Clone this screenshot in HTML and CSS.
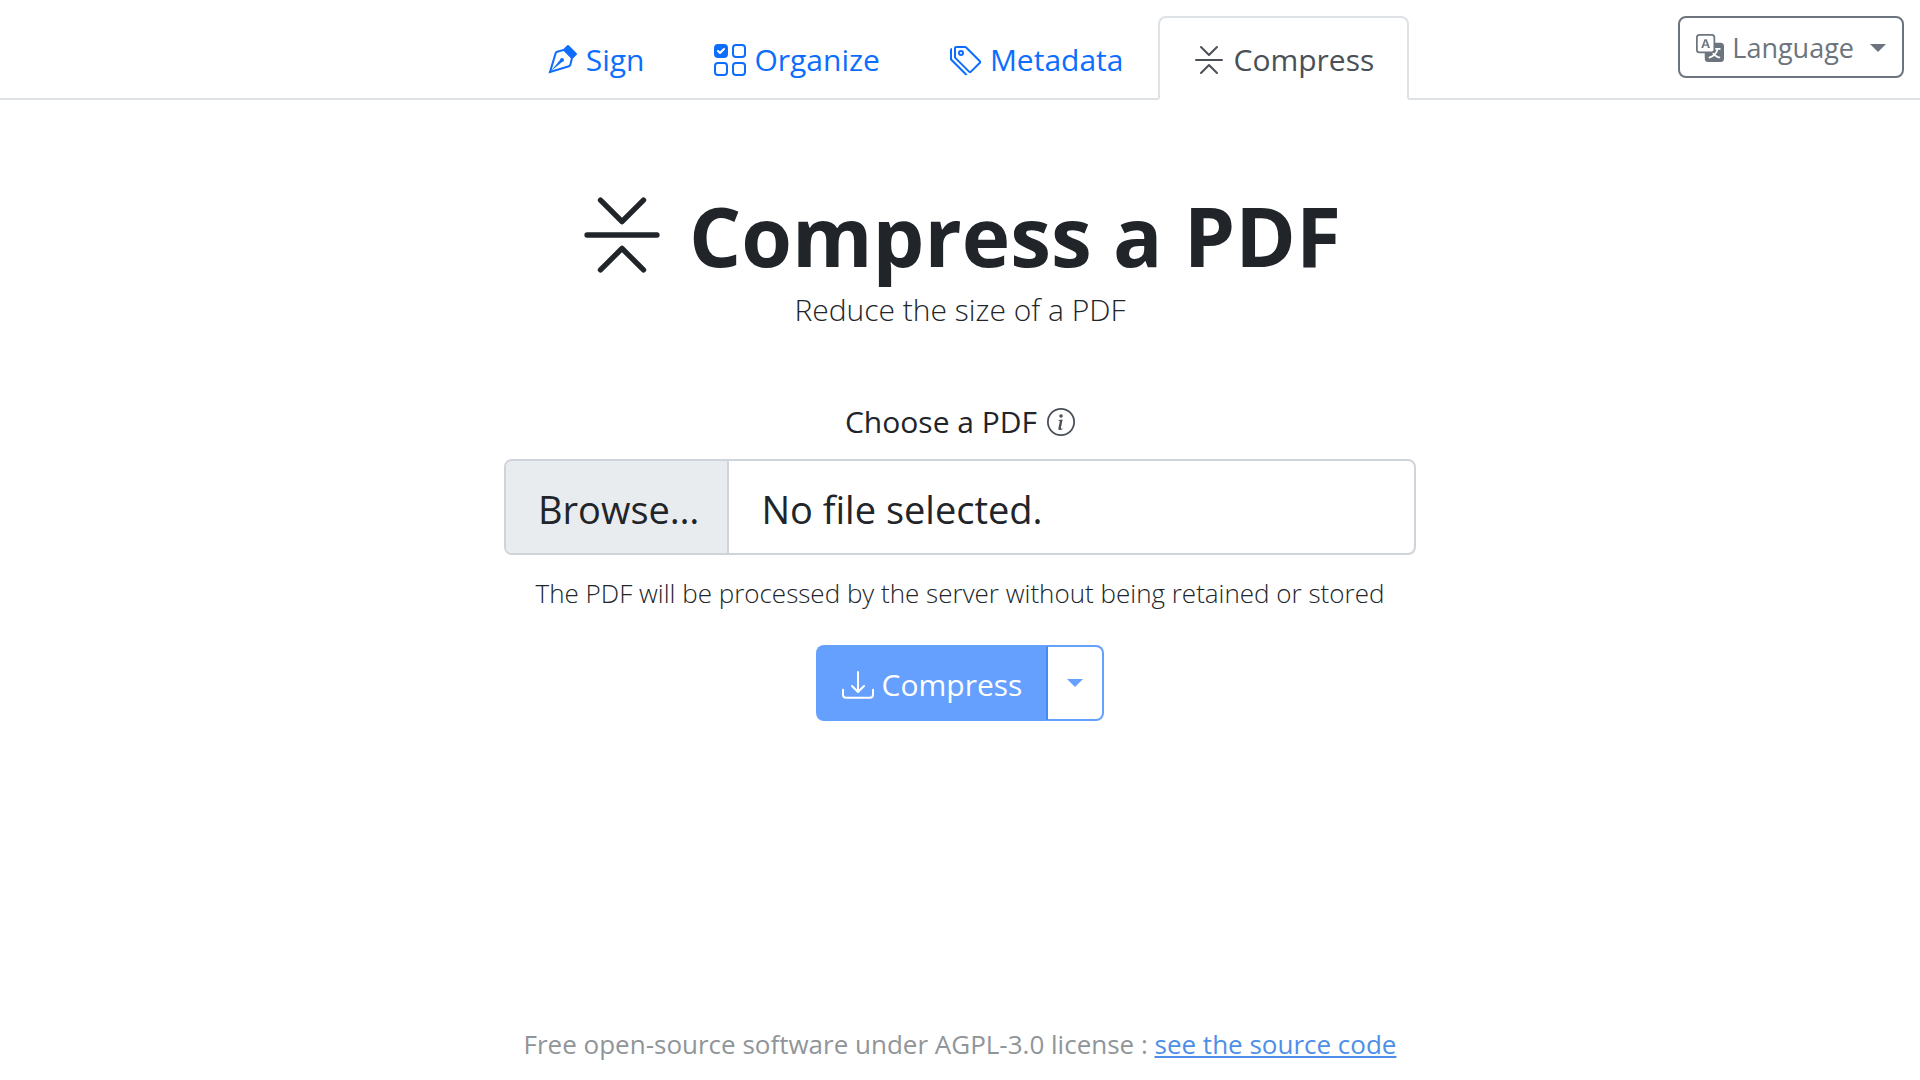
FILE: index.html
```html
<!DOCTYPE html>
<html lang="en">
<head>
<meta charset="utf-8">
<meta name="viewport" content="width=device-width, initial-scale=1">
<title>Compress a PDF</title>
<link rel="stylesheet" href="styles.css">
</head>
<body>
<svg class="sprite" aria-hidden="true">
  <symbol id="i-pen" viewBox="0 0 16 16"><path fill-rule="evenodd" d="M10.646.646a.5.5 0 0 1 .708 0l4 4a.5.5 0 0 1 0 .708l-1.902 1.902-.829 3.313a1.5 1.5 0 0 1-1.024 1.073L1.254 14.746 4.358 4.4A1.5 1.5 0 0 1 5.43 3.377l3.313-.828zm-1.8 2.908-3.173.793a.5.5 0 0 0-.358.342l-2.57 8.565 8.567-2.57a.5.5 0 0 0 .34-.357l.794-3.174-3.6-3.6z"/><path fill-rule="evenodd" d="M2.832 13.228 8 9a1 1 0 1 0-1-1l-4.228 5.168-.026.086z"/></symbol>
  <symbol id="i-grid" viewBox="0 0 16 16"><path d="M2 10h3a1 1 0 0 1 1 1v3a1 1 0 0 1-1 1H2a1 1 0 0 1-1-1v-3a1 1 0 0 1 1-1m9-9h3a1 1 0 0 1 1 1v3a1 1 0 0 1-1 1h-3a1 1 0 0 1-1-1V2a1 1 0 0 1 1-1m0 9a1 1 0 0 0-1 1v3a1 1 0 0 0 1 1h3a1 1 0 0 0 1-1v-3a1 1 0 0 0-1-1zm0-10a2 2 0 0 0-2 2v3a2 2 0 0 0 2 2h3a2 2 0 0 0 2-2V2a2 2 0 0 0-2-2zM2 9a2 2 0 0 0-2 2v3a2 2 0 0 0 2 2h3a2 2 0 0 0 2-2v-3a2 2 0 0 0-2-2zm7 2a2 2 0 0 1 2-2h3a2 2 0 0 1 2 2v3a2 2 0 0 1-2 2h-3a2 2 0 0 1-2-2zM0 2a2 2 0 0 1 2-2h3a2 2 0 0 1 2 2v3a2 2 0 0 1-2 2H2a2 2 0 0 1-2-2zm5.354.854a.5.5 0 1 0-.708-.708L3 3.793l-.646-.647a.5.5 0 1 0-.708.708l1 1a.5.5 0 0 0 .708 0z"/></symbol>
  <symbol id="i-tags" viewBox="0 0 16 16"><path d="M3 2v4.586l7 7L14.586 9l-7-7zM2 2a1 1 0 0 1 1-1h4.586a1 1 0 0 1 .707.293l7 7a1 1 0 0 1 0 1.414l-4.586 4.586a1 1 0 0 1-1.414 0l-7-7A1 1 0 0 1 2 6.586z"/><path d="M5.5 5a.5.5 0 1 1 0-1 .5.5 0 0 1 0 1m0 1a1.5 1.5 0 1 0 0-3 1.5 1.5 0 0 0 0 3M1 7.086a1 1 0 0 0 .293.707L8.75 15.25l-.043.043a1 1 0 0 1-1.414 0l-7-7A1 1 0 0 1 0 7.586V3a1 1 0 0 1 1-1z"/></symbol>
  <symbol id="i-contract" viewBox="0 0 16 16"><path d="M3.646 14.854a.5.5 0 0 0 .708 0L8 11.207l3.646 3.647a.5.5 0 0 0 .708-.708l-4-4a.5.5 0 0 0-.708 0l-4 4a.5.5 0 0 0 0 .708m0-13.708a.5.5 0 0 1 .708 0L8 4.793l3.646-3.647a.5.5 0 0 1 .708.708l-4 4a.5.5 0 0 1-.708 0l-4-4a.5.5 0 0 1 0-.708M1 8a.5.5 0 0 1 .5-.5h13a.5.5 0 0 1 0 1h-13A.5.5 0 0 1 1 8"/></symbol>
  <symbol id="i-translate" viewBox="0 0 16 16"><path d="M4.545 6.714 4.11 8H3l1.862-5h1.284L8 8H6.833l-.435-1.286zm1.634-.736L5.5 3.956h-.049l-.679 2.022z"/><path d="M0 2a2 2 0 0 1 2-2h7a2 2 0 0 1 2 2v3h3a2 2 0 0 1 2 2v7a2 2 0 0 1-2 2H7a2 2 0 0 1-2-2v-3H2a2 2 0 0 1-2-2zm2-1a1 1 0 0 0-1 1v7a1 1 0 0 0 1 1h7a1 1 0 0 0 1-1V2a1 1 0 0 0-1-1zm7.138 9.995q.289.451.63.846c-.748.575-1.673 1.001-2.768 1.292.178.217.451.635.555.867 1.125-.359 2.08-.844 2.886-1.494.777.665 1.739 1.165 2.93 1.472.133-.254.414-.673.629-.89-1.125-.253-2.057-.694-2.82-1.284.681-.747 1.222-1.651 1.621-2.757H14V8h-3v1.047h.765c-.318.844-.74 1.546-1.272 2.13a6 6 0 0 1-.415-.492 2 2 0 0 1-.94.31"/></symbol>
  <symbol id="i-info" viewBox="0 0 16 16"><path d="M8 15A7 7 0 1 1 8 1a7 7 0 0 1 0 14m0 1A8 8 0 1 0 8 0a8 8 0 0 0 0 16"/><path d="m8.93 6.588-2.29.287-.082.38.45.083c.294.07.352.176.288.469l-.738 3.468c-.194.897.105 1.319.808 1.319.545 0 1.178-.252 1.465-.598l.088-.416c-.2.176-.492.246-.686.246-.275 0-.375-.193-.304-.533zM9 4.5a1 1 0 1 1-2 0 1 1 0 0 1 2 0"/></symbol>
  <symbol id="i-download" viewBox="0 0 16 16"><path d="M.5 9.9a.5.5 0 0 1 .5.5v2.5a1 1 0 0 0 1 1h12a1 1 0 0 0 1-1v-2.5a.5.5 0 0 1 1 0v2.5a2 2 0 0 1-2 2H2a2 2 0 0 1-2-2v-2.5a.5.5 0 0 1 .5-.5"/><path d="M7.646 11.854a.5.5 0 0 0 .708 0l3-3a.5.5 0 0 0-.708-.708L8.5 10.293V1.5a.5.5 0 0 0-1 0v8.793L5.354 8.146a.5.5 0 1 0-.708.708z"/></symbol>
</svg>

<header class="topbar">
  <nav class="tabs" aria-label="Tools">
    <a class="tab" href="#sign"><svg class="icon"><use href="#i-pen"/></svg>Sign</a>
    <a class="tab" href="#organize"><svg class="icon"><use href="#i-grid"/></svg>Organize</a>
    <a class="tab" href="#metadata"><svg class="icon"><use href="#i-tags"/></svg>Metadata</a>
    <a class="tab tab-active" href="#compress" aria-current="page"><svg class="icon"><use href="#i-contract"/></svg>Compress</a>
  </nav>
  <button class="language" type="button" aria-haspopup="true"><svg class="icon icon-small"><use href="#i-translate"/></svg>Language<span class="caret"></span></button>
</header>

<main class="content">
  <h1 class="title"><svg class="icon icon-title"><use href="#i-contract"/></svg>Compress a PDF</h1>
  <p class="lead">Reduce the size of a PDF</p>
  <form class="form">
    <label class="field-label" for="pdf">Choose a PDF <svg class="icon icon-small icon-info"><use href="#i-info"/></svg></label>
    <label class="file">
      <input class="file-input" id="pdf" type="file" accept=".pdf,application/pdf">
      <span class="file-button">Browse…</span>
      <span class="file-name">No file selected.</span>
    </label>
    <p class="help">The PDF will be processed by the server without being retained or stored</p>
    <div class="actions">
      <button class="submit" type="submit" disabled><svg class="icon"><use href="#i-download"/></svg>Compress</button>
      <button class="more" type="button" aria-label="More options" disabled><span class="caret"></span></button>
    </div>
  </form>
</main>

<footer class="footer">Free open-source software under AGPL-3.0 license : <a class="source" href="#source">see the source code</a></footer>
</body>
</html>
```

FILE: styles.css
```css
*,
*::before,
*::after {
  box-sizing: border-box;
}

body {
  display: flex;
  flex-direction: column;
  min-height: 100vh;
  margin: 0;
  background: #fff;
  color: #212529;
  font-family: "Open Sans", "Noto Sans", sans-serif;
  font-size: 30px;
  line-height: 48px;
}

button {
  font: inherit;
}

.sprite {
  position: absolute;
  width: 0;
  height: 0;
}

.icon {
  flex: none;
  width: 32px;
  height: 32px;
  fill: currentColor;
}

.icon-small {
  width: 28px;
  height: 28px;
}

.caret {
  border: 8px solid transparent;
  border-top-color: currentColor;
  border-bottom: 0;
}

/* Top bar */

.topbar {
  position: relative;
  padding-top: 16px;
  border-bottom: 2px solid #dee2e6;
}

.tabs {
  display: flex;
  justify-content: center;
  margin-bottom: -2px;
}

.tab {
  display: flex;
  align-items: center;
  gap: 8px;
  padding: 18px 33px 14px;
  border: 2px solid transparent;
  border-radius: 8px 8px 0 0;
  color: #0d6efd;
  text-decoration: none;
}

.tab-active {
  border-color: #dee2e6 #dee2e6 #fff;
  background: #fff;
  color: #495057;
}

.language {
  position: absolute;
  top: 16px;
  right: 16px;
  display: flex;
  align-items: center;
  gap: 8px;
  height: 62px;
  padding: 2px 16px 0;
  border: 2px solid #6c757d;
  border-radius: 8px;
  background: #fff;
  color: #6c757d;
  font-size: 27px;
}

.language .caret {
  margin-left: 8px;
}

/* Main column */

.content {
  flex: 1;
  padding: 84px 24px 0;
  text-align: center;
}

.title {
  display: flex;
  align-items: center;
  justify-content: center;
  gap: 24px;
  margin: 0;
  font-size: 82px;
  font-weight: 700;
  line-height: 102px;
}

.icon-title {
  width: 86px;
  height: 86px;
}

.lead {
  margin: 0 0 64px;
  font-weight: 300;
}

.form {
  max-width: 912px;
  margin: 0 auto;
}

.field-label {
  display: flex;
  align-items: center;
  justify-content: center;
  gap: 10px;
  margin-bottom: 13px;
}

.icon-info {
  color: #495057;
}

.file {
  position: relative;
  display: flex;
  overflow: hidden;
  border: 2px solid #ced4da;
  border-radius: 8px;
  font-size: 38px;
  line-height: 60px;
  text-align: left;
}

.file-input {
  position: absolute;
  inset: 0;
  width: 100%;
  opacity: 0;
}

.file-button {
  padding: 18px 28px 14px 32px;
  border-right: 2px solid #ced4da;
  background: #e9ecef;
}

.file-name {
  flex: 1;
  padding: 18px 32px 14px;
}

.help {
  margin: 14px 0 28px;
  font-size: 26px;
  font-weight: 300;
}

.actions {
  display: flex;
  justify-content: center;
}

.submit,
.more {
  display: flex;
  align-items: center;
  gap: 8px;
  height: 76px;
  border: 2px solid #65a0fe;
}

.submit {
  padding: 4px 24px 0;
  border-right-color: #3d8bfd;
  border-radius: 8px 0 0 8px;
  background: #65a0fe;
  color: #fff;
}

.more {
  padding: 0 19px;
  border-left: 0;
  border-radius: 0 8px 8px 0;
  background: #fff;
  color: #65a0fe;
}

.footer {
  padding: 0 24px 12px;
  color: #909599;
  font-size: 26px;
  text-align: center;
}

.source {
  color: #4d8fe8;
}
```
